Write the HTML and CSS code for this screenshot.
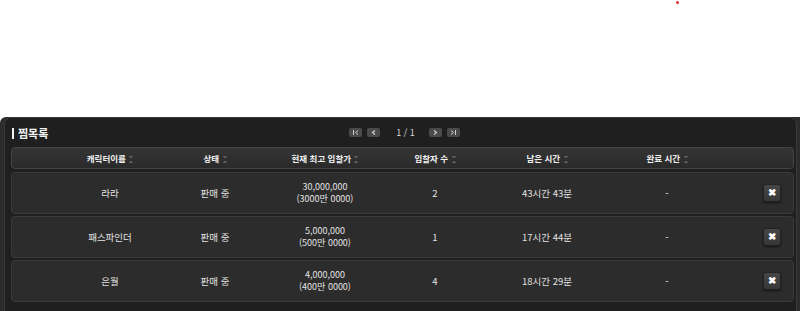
FILE: index.html
```html
<!DOCTYPE html>
<html lang="ko">
<head>
    <meta charset="UTF-8">
    <meta name="viewport" content="width=device-width, initial-scale=1.0">
    <title>찜목록</title>
    <link rel="stylesheet" href="styles.css">
</head>
<body>
    <span class="dot"></span>

    <div class="frame">
        <div class="panel">
            <div class="panel-head">
                <h2 class="title">찜목록</h2>
                <div class="pager">
                    <button class="pg"><svg width="6" height="5" viewBox="0 0 6 5"><path d="M0.5 0v5M5 0.5L2.5 2.5L5 4.5" stroke="#cfcfcf" stroke-width="1" fill="none"/></svg></button>
                    <button class="pg"><svg width="6" height="5" viewBox="0 0 6 5"><path d="M4 0.5L1.5 2.5L4 4.5" stroke="#cfcfcf" stroke-width="1.2" fill="none"/></svg></button>
                    <span class="pg-text">1 / 1</span>
                    <button class="pg"><svg width="6" height="5" viewBox="0 0 6 5"><path d="M2 0.5L4.5 2.5L2 4.5" stroke="#cfcfcf" stroke-width="1.2" fill="none"/></svg></button>
                    <button class="pg"><svg width="6" height="5" viewBox="0 0 6 5"><path d="M1 0.5L3.5 2.5L1 4.5M5.5 0v5" stroke="#cfcfcf" stroke-width="1" fill="none"/></svg></button>
                </div>
                <div></div>
            </div>

            <div class="list-head grid">
                <div class="th">캐릭터이름 <i class="sort"></i></div>
                <div class="th">상태 <i class="sort"></i></div>
                <div class="th">현재 최고 입찰가 <i class="sort"></i></div>
                <div class="th">입찰자 수 <i class="sort"></i></div>
                <div class="th">남은 시간 <i class="sort"></i></div>
                <div class="th">완료 시간 <i class="sort"></i></div>
                <div></div>
            </div>

            <div class="row grid">
                <div>라라</div>
                <div>판매 중</div>
                <div class="price">30,000,000<br>(3000만 0000)</div>
                <div>2</div>
                <div>43시간 43분</div>
                <div>-</div>
                <div class="act"><button class="del">&#10006;</button></div>
            </div>
            <div class="row grid">
                <div>패스파인더</div>
                <div>판매 중</div>
                <div class="price">5,000,000<br>(500만 0000)</div>
                <div>1</div>
                <div>17시간 44분</div>
                <div>-</div>
                <div class="act"><button class="del">&#10006;</button></div>
            </div>
            <div class="row grid">
                <div>은월</div>
                <div>판매 중</div>
                <div class="price">4,000,000<br>(400만 0000)</div>
                <div>4</div>
                <div>18시간 29분</div>
                <div>-</div>
                <div class="act"><button class="del">&#10006;</button></div>
            </div>
        </div>
    </div>
</body>
</html>
```

FILE: styles.css
```css
body {
    font-family: "Noto Sans CJK KR", "Noto Sans", sans-serif;
    margin: 0;
    padding: 0;
    background-color: white;
    color: #e8e8e8;
    font-size: 9.5px;
}
.dot {
    position: absolute;
    left: 676px;
    top: 1px;
    width: 3px;
    height: 3px;
    border-radius: 50%;
    background-color: #e03030;
}
.frame {
    margin-top: 117px;
    height: 194px;
    padding-left: 4px;
    padding-right: 3px;
    background-color: #2c2c2c;
    border-top-left-radius: 6px;
}
.panel {
    height: 100%;
    box-sizing: border-box;
    background-color: #1f1f1f;
    border: 1px solid #3a3a3a;
    border-bottom: none;
    border-radius: 7px 7px 0 0;
    padding: 0 2px 0 6px;
}
.panel-head {
    display: grid;
    grid-template-columns: 1fr auto 1fr;
    align-items: center;
    height: 29px;
}
.title {
    margin: 0;
    font-size: 11px;
    font-weight: bold;
    color: #f2f2f2;
    border-left: 2px solid #f2f2f2;
    padding-left: 4px;
    line-height: 11px;
    margin-left: 1px;
    margin-top: 2px;
}
.pager {
    display: flex;
    align-items: center;
    gap: 5px;
    padding-left: 4px;
}
.pg {
    width: 13px;
    height: 9px;
    padding: 0;
    border: none;
    border-radius: 2px;
    background-color: #4a4a4a;
    display: flex;
    align-items: center;
    justify-content: center;
}
.pg-text {
    color: #d8d8d8;
    font-size: 9px;
    margin: 0 9px 0 11px;
}
.grid {
    display: grid;
    grid-template-columns: 160px 50px 170px 50px 174px 66px 1fr;
    align-items: center;
    text-align: center;
    padding-left: 18px;
    box-sizing: border-box;
}
.list-head {
    height: 22px;
    border: 1px solid #444;
    border-radius: 4px;
    background: linear-gradient(#353535, #2a2a2a);
    margin-bottom: 3px;
}
.th {
    font-weight: bold;
    font-size: 8.5px;
    color: #f0f0f0;
}
.sort {
    display: inline-block;
    width: 4px;
    height: 7px;
    margin-left: 1px;
    vertical-align: -1px;
    background:
        linear-gradient(to top right, transparent 50%, #5c5c5c 50%) 0 0 / 2px 3px no-repeat,
        linear-gradient(to top left, transparent 50%, #5c5c5c 50%) 2px 0 / 2px 3px no-repeat,
        linear-gradient(to bottom right, transparent 50%, #5c5c5c 50%) 0 4px / 2px 3px no-repeat,
        linear-gradient(to bottom left, transparent 50%, #5c5c5c 50%) 2px 4px / 2px 3px no-repeat;
}
.row {
    height: 42px;
    border: 1px solid #3a3a3a;
    border-radius: 4px;
    background-color: #2c2c2c;
    margin-bottom: 2px;
    color: #e2e2e2;
}
.price {
    line-height: 12px;
    font-size: 9px;
}
.act {
    justify-self: end;
    padding-right: 12px;
}
.del {
    width: 18px;
    height: 18px;
    padding: 0;
    border: 1px solid #222;
    border-radius: 3px;
    background: linear-gradient(#474747, #363636);
    color: white;
    font-size: 10px;
    font-weight: bold;
    line-height: 16px;
    box-shadow: 0 1px 2px rgba(0, 0, 0, 0.6);
    cursor: pointer;
}
```
